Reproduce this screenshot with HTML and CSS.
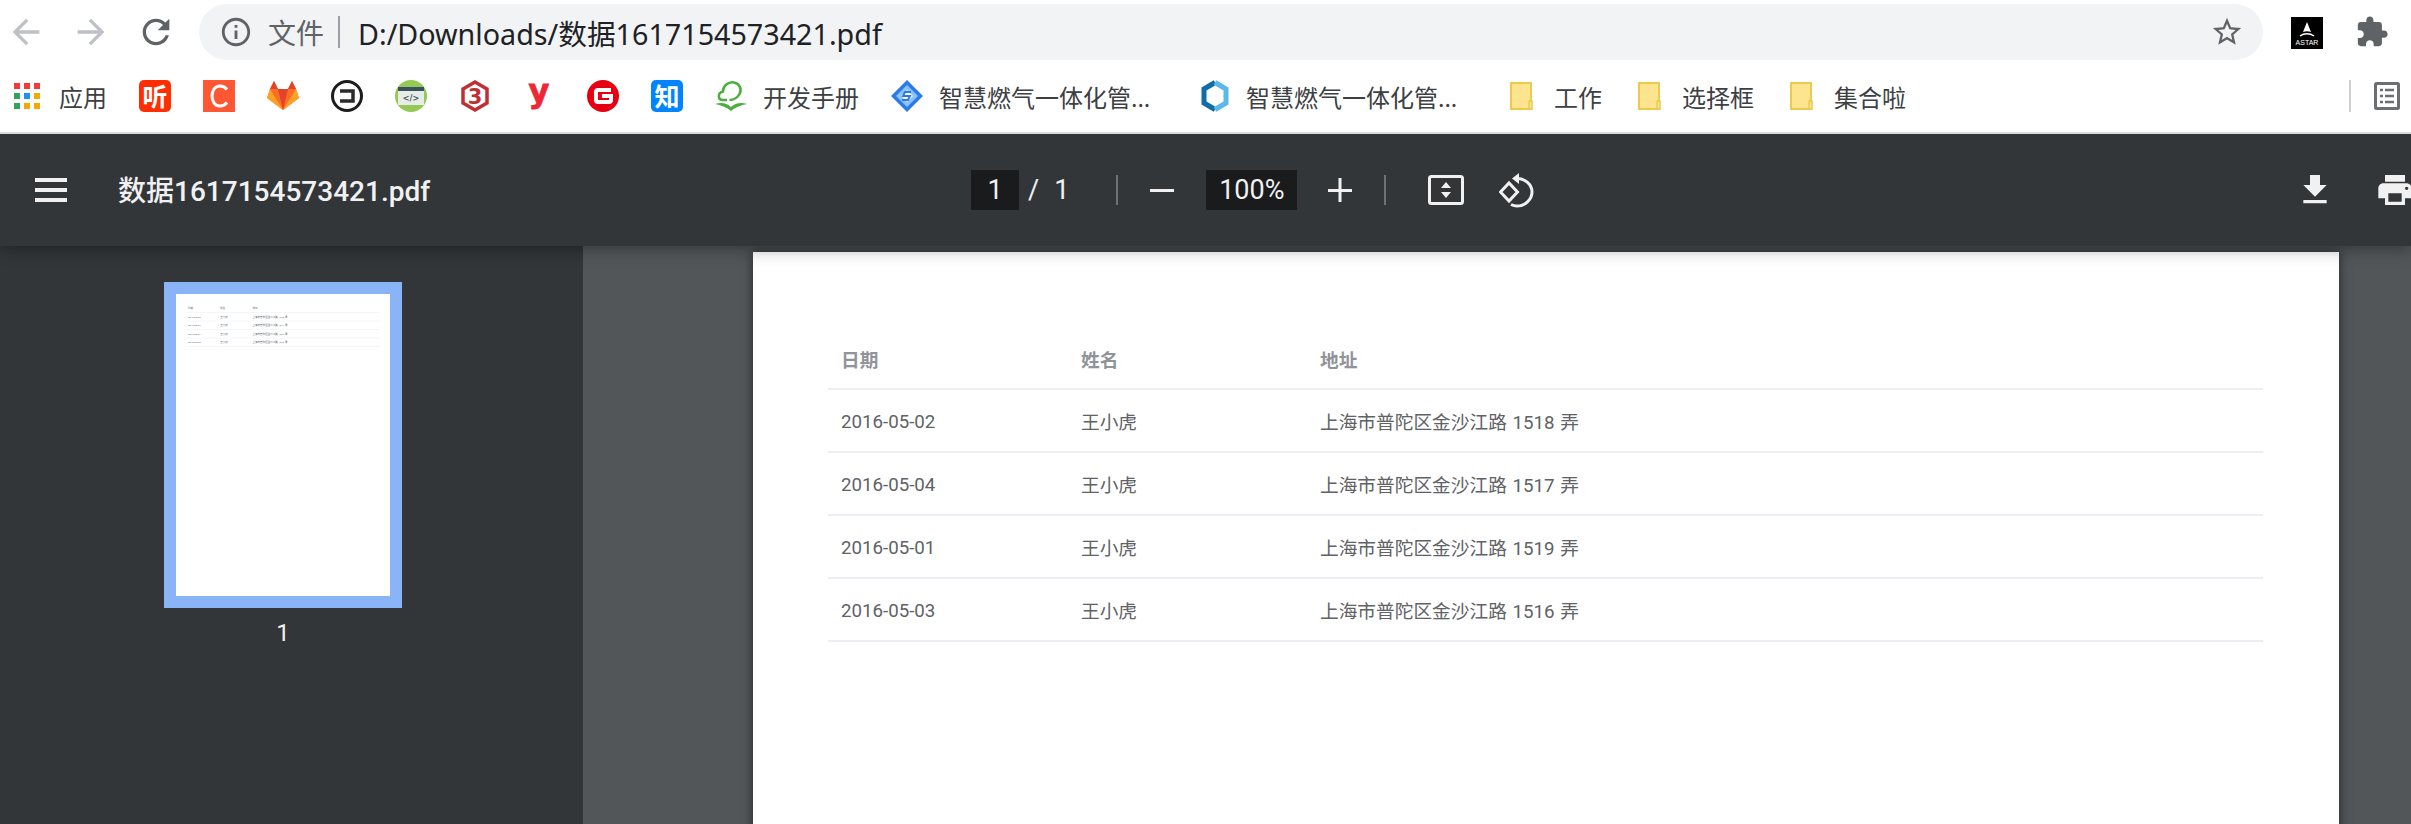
FILE: index.html
```html
<!DOCTYPE html>
<html lang="zh-CN">
<head>
    <meta charset="UTF-8">
    <title>数据1617154573421.pdf</title>
    <link rel="stylesheet" href="styles.css">
</head>
<body>
    <!-- Browser: address row -->
    <div class="address-row">
        <div class="nav">
            <svg class="nav-icon off" viewBox="0 0 24 24"><path d="M20 11H7.830l5.590-5.590L12 4l-8 8 8 8 1.410-1.410L7.830 13H20v-2z"/></svg>
            <svg class="nav-icon off" viewBox="0 0 24 24"><path d="M12 4l-1.410 1.410L16.170 11H4v2h12.170l-5.580 5.590L12 20l8-8z"/></svg>
            <svg class="nav-icon" viewBox="0 0 24 24"><path d="M17.650 6.350C16.200 4.900 14.210 4 12 4c-4.420 0-7.990 3.580-7.990 8s3.570 8 7.990 8c3.730 0 6.840-2.550 7.730-6h-2.080c-.82 2.330-3.040 4-5.650 4-3.310 0-6-2.690-6-6s2.690-6 6-6c1.660 0 3.140.69 4.220 1.780L13 11h7V4l-2.350 2.350z"/></svg>
        </div>
        <div class="omnibox">
            <svg class="info-icon" viewBox="0 0 24 24"><path d="M11 7h2v2h-2zm0 4h2v6h-2zm1-9C6.480 2 2 6.480 2 12s4.480 10 10 10 10-4.480 10-10S17.520 2 12 2zm0 18c-4.410 0-8-3.590-8-8s3.590-8 8-8 8 3.590 8 8-3.590 8-8 8z"/></svg>
            <span class="scheme">文件</span>
            <span class="omni-sep"></span>
            <span class="url">D:/Downloads/数据1617154573421.pdf</span>
            <svg class="star-icon" viewBox="0 0 24 24"><path d="M22 9.240l-7.190-.62L12 2 9.190 8.630 2 9.240l5.460 4.730L5.820 21 12 17.270 18.180 21l-1.630-7.030L22 9.240zM12 15.400l-3.760 2.270 1-4.280-3.320-2.880 4.380-.38L12 6.100l1.710 4.040 4.380.38-3.320 2.880 1 4.280L12 15.400z"/></svg>
        </div>
        <svg class="astar" viewBox="0 0 32 32">
            <rect width="32" height="32" fill="#000"/>
            <path d="M16 5l4 10c-2.500-1-5.500-1-8 0z" fill="#fff"/>
            <path d="M9 19c4-3 10-3 14 0" fill="none" stroke="#fff" stroke-width="1.500"/>
            <text x="16" y="28" class="astar-text">ASTAR</text>
        </svg>
        <svg class="puzzle" viewBox="0 0 24 24"><path d="M20.500 11H19V7c0-1.100-.9-2-2-2h-4V3.500C13 2.120 11.880 1 10.500 1S8 2.120 8 3.500V5H4c-1.100 0-1.990.9-1.990 2v3.800H3.500c1.490 0 2.700 1.210 2.700 2.700s-1.210 2.700-2.700 2.700H2V20c0 1.100.9 2 2 2h3.800v-1.500c0-1.490 1.210-2.700 2.700-2.700 1.490 0 2.700 1.210 2.700 2.700V22H17c1.100 0 2-.9 2-2v-4h1.500c1.380 0 2.500-1.120 2.500-2.500S21.880 11 20.500 11z"/></svg>
    </div>

    <!-- Browser: bookmarks -->
    <div class="bookmarks">
        <div class="bm bm-apps">
            <div class="apps-grid">
                <i class="red"></i><i class="red"></i><i class="red"></i>
                <i class="green"></i><i class="blue"></i><i class="amber"></i>
                <i class="green"></i><i class="amber"></i><i class="amber"></i>
            </div>
            <span>应用</span>
        </div>
        <div class="bm-logos">
            <span class="logo-tile tile-ting">听</span>
            <svg class="logo" viewBox="0 0 32 32"><rect width="32" height="32" fill="#ff5733"/><path d="M24 9.500C22 7 19.500 6 17 6c-5 0-8 4.500-8 10s3 10 8 10c2.500 0 5-1 7-3.500" fill="none" stroke="#fff" stroke-width="3"/></svg>
            <svg class="logo" viewBox="0 0 32 32"><path d="M16 30L0 18l3-9 4-8 4 8h10l4-8 4 8 3 9z" fill="#fc6d26"/><path d="M16 30L0 18l3-9z" fill="#fca326"/><path d="M16 30l16-12-3-9z" fill="#fca326"/><path d="M16 30L11 9h10z" fill="#e24329"/><path d="M3 9l4-8 4 8zM21 9l4-8 4 8z" fill="#e24329"/></svg>
            <svg class="logo" viewBox="0 0 32 32"><circle cx="16" cy="16" r="14.500" fill="#fff" stroke="#1c1c1c" stroke-width="3"/><path d="M9 11h13v10H9" fill="none" stroke="#2a2a2a" stroke-width="3.500"/></svg>
            <svg class="logo" viewBox="0 0 32 32"><circle cx="16" cy="16" r="16" fill="#93c954"/><rect x="3" y="8" width="26" height="17" fill="#e8ece6"/><rect x="3" y="7" width="26" height="4" fill="#37515f"/><text x="16" y="21" class="code-text">&lt;/&gt;</text></svg>
            <svg class="logo" viewBox="0 0 32 32"><path d="M16 2l12 7v14l-12 7-12-7V9z" fill="none" stroke="#bf2f33" stroke-width="3.500"/><text x="16" y="24" class="three-text">3</text></svg>
            <span class="logo-tile tile-y">y</span>
            <svg class="logo" viewBox="0 0 32 32"><circle cx="16" cy="16" r="16" fill="#e60012"/><path d="M24 10H11a2 2 0 0 0-2 2v8a2 2 0 0 0 2 2h11a2 2 0 0 0 2-2v-4h-9" fill="none" stroke="#fff" stroke-width="4"/></svg>
            <span class="logo-tile tile-zhi">知</span>
            <svg class="logo" viewBox="0 0 32 32"><path d="M12 20H8c-5 0-6-7 0-8.500C8 6 13 1.500 19 2.500c6 1 8 7 5.500 11.500-2 3.500-6 6-10 6" fill="none" stroke="#4cae3f" stroke-width="2.500"/><path d="M0 24c6-2 12-1 16 3 4-4 10-5 16-3-6 1-11 3-16 7-5-4-10-6-16-7z" fill="#4cae3f"/></svg>
        </div>
        <div class="bm"><span>开发手册</span></div>
        <div class="bm bm-wide">
            <svg class="logo" viewBox="0 0 32 32"><path d="M16 0l16 16-16 16L0 16z" fill="#2d7bea"/><path d="M16 5l11 11-11 11L5 16z" fill="#8cc3f7"/><path d="M16 10l6 6-6 6-6-6z" fill="#fff"/><path d="M20 12h-6l-2 4h7l-2 4h-6" fill="none" stroke="#2d7bea" stroke-width="2"/></svg>
            <span>智慧燃气一体化管...</span>
        </div>
        <div class="bm bm-wide">
            <svg class="logo logo-hex" viewBox="0 0 30 32"><path d="M15 2.500L4 9v14l11 6.500" fill="none" stroke="#0f6da8" stroke-width="5"/><path d="M15 2.500L26 9v14l-11 6.500" fill="none" stroke="#5cb8e6" stroke-width="5"/></svg>
            <span>智慧燃气一体化管...</span>
        </div>
        <div class="bm bm-folder"><svg class="folder" viewBox="0 0 24 28"><path d="M1 1h20v26H1z" fill="#fde58f" stroke="#ecc94f" stroke-width="2"/><path d="M19 19h3v8h-3z" fill="#fde58f" stroke="#ecc94f" stroke-width="1.500"/></svg><span>工作</span></div>
        <div class="bm bm-folder"><svg class="folder" viewBox="0 0 24 28"><path d="M1 1h20v26H1z" fill="#fde58f" stroke="#ecc94f" stroke-width="2"/><path d="M19 19h3v8h-3z" fill="#fde58f" stroke="#ecc94f" stroke-width="1.500"/></svg><span>选择框</span></div>
        <div class="bm bm-folder"><svg class="folder" viewBox="0 0 24 28"><path d="M1 1h20v26H1z" fill="#fde58f" stroke="#ecc94f" stroke-width="2"/><path d="M19 19h3v8h-3z" fill="#fde58f" stroke="#ecc94f" stroke-width="1.500"/></svg><span>集合啦</span></div>
        <div class="bm-end">
            <span class="bm-sep"></span>
            <svg class="reading" viewBox="0 0 26 28"><rect x="1.500" y="1.500" width="23" height="25" rx="1" fill="none" stroke="#6b6e72" stroke-width="3"/><path d="M6 8h3M6 14h3M6 20h3M11 8h9M11 14h9M11 20h9" stroke="#6b6e72" stroke-width="2.500"/></svg>
        </div>
    </div>

    <!-- PDF viewer toolbar -->
    <div class="pdf-toolbar">
        <div class="tb-left">
            <svg class="menu-icon" viewBox="0 0 32 24"><path d="M0 0h32v4H0zM0 10h32v4H0zM0 20h32v4H0z"/></svg>
            <span class="doc-title">数据1617154573421.pdf</span>
        </div>
        <div class="tb-center">
            <span class="num-box page-box">1</span>
            <span class="page-slash">/</span>
            <span class="page-total">1</span>
            <span class="tb-sep first"></span>
            <svg class="tb-icon" viewBox="0 0 24 24"><path d="M0 11h24v3H0z"/></svg>
            <span class="num-box zoom-box">100%</span>
            <svg class="tb-icon" viewBox="0 0 24 24"><path d="M0 11h24v3H0zM10.500 0h3v24h-3z"/></svg>
            <span class="tb-sep second"></span>
            <svg class="fit-icon" viewBox="0 0 36 30"><rect x="1.500" y="1.500" width="33" height="27" rx="2" fill="none" stroke="#f1f1f1" stroke-width="3"/><path d="M18 7l5 6H13zM18 23l-5-6h10z" fill="#f1f1f1"/></svg>
            <svg class="rotate-icon" viewBox="0 0 36 36"><path d="M1.500 20L10 11l8.500 9-8.500 9z" fill="none" stroke="#f1f1f1" stroke-width="3"/><path d="M18 6.500c8 0 15 6 15 13.500s-7 14-15 14c-2 0-4-.5-6-1.500" fill="none" stroke="#f1f1f1" stroke-width="3"/><path d="M20 1v11l-7-5.500z" fill="#f1f1f1"/></svg>
        </div>
        <div class="tb-right">
            <svg class="action-icon" viewBox="0 0 24 24"><path d="M19 9h-4V3H9v6H5l7 7 7-7zM5 18v2h14v-2H5z"/></svg>
            <svg class="action-icon" viewBox="0 0 24 24"><path d="M19 8H5c-1.660 0-3 1.340-3 3v6h4v4h12v-4h4v-6c0-1.660-1.340-3-3-3zm-3 11H8v-5h8v5zm3-7c-.55 0-1-.45-1-1s.45-1 1-1 1 .45 1 1-.45 1-1 1zm-1-9H6v4h12V3z"/></svg>
        </div>
    </div>

    <div class="viewer">
        <!-- Thumbnails -->
        <div class="sidebar">
            <div class="thumb">
                <div class="thumb-inner">
                    <table class="data-table">
                        <tr><th>日期</th><th>姓名</th><th>地址</th></tr>
                        <tr><td>2016-05-02</td><td>王小虎</td><td>上海市普陀区金沙江路 1518 弄</td></tr>
                        <tr><td>2016-05-04</td><td>王小虎</td><td>上海市普陀区金沙江路 1517 弄</td></tr>
                        <tr><td>2016-05-01</td><td>王小虎</td><td>上海市普陀区金沙江路 1519 弄</td></tr>
                        <tr><td>2016-05-03</td><td>王小虎</td><td>上海市普陀区金沙江路 1516 弄</td></tr>
                    </table>
                </div>
            </div>
            <div class="thumb-num">1</div>
        </div>

        <!-- Page -->
        <div class="main-view">
            <div class="page">
                <table class="data-table">
                    <tr><th>日期</th><th>姓名</th><th>地址</th></tr>
                    <tr><td>2016-05-02</td><td>王小虎</td><td>上海市普陀区金沙江路 1518 弄</td></tr>
                    <tr><td>2016-05-04</td><td>王小虎</td><td>上海市普陀区金沙江路 1517 弄</td></tr>
                    <tr><td>2016-05-01</td><td>王小虎</td><td>上海市普陀区金沙江路 1519 弄</td></tr>
                    <tr><td>2016-05-03</td><td>王小虎</td><td>上海市普陀区金沙江路 1516 弄</td></tr>
                </table>
            </div>
        </div>
    </div>
</body>
</html>
```

FILE: styles.css
```css
html, body {
    margin: 0;
    padding: 0;
    height: 100%;
}
body {
    width: 2411px;
    height: 824px;
    overflow: hidden;
    display: flex;
    flex-direction: column;
    background: #fff;
    font-family: "Noto Sans", "Noto Sans CJK SC", sans-serif;
}
svg {
    display: block;
    flex: none;
}

/* Address row */
.address-row {
    height: 66px;
    box-sizing: border-box;
    padding: 4px 24px 6px 0;
    display: flex;
    align-items: center;
}
.nav {
    display: flex;
    align-items: center;
    gap: 33px;
    padding-left: 10px;
    margin-right: 27px;
}
.nav-icon {
    width: 40px;
    height: 40px;
    margin: 0 -4px;
    fill: #5f6368;
}
.nav-icon.off {
    fill: #bdc1c6;
}
.omnibox {
    flex: 1;
    height: 56px;
    box-sizing: border-box;
    padding: 0 19px 0 20px;
    display: flex;
    align-items: center;
    background: #f1f3f4;
    border-radius: 28px;
}
.info-icon {
    width: 34px;
    height: 34px;
    fill: #5f6368;
}
.scheme {
    margin-left: 15px;
    font-size: 28px;
    color: #5f6368;
}
.omni-sep {
    width: 2px;
    height: 32px;
    margin: 0 18px 0 14px;
    background: #9aa0a6;
}
.url {
    font-size: 28.700px;
    color: #202124;
    flex: 1;
}
.star-icon {
    width: 34px;
    height: 34px;
    fill: #5f6368;
}
.astar {
    width: 32px;
    height: 32px;
    margin-left: 28px;
    margin-top: 2px;
}
.astar-text {
    font-family: "Liberation Sans", sans-serif;
    font-size: 7px;
    fill: #fff;
    text-anchor: middle;
}
.puzzle {
    width: 34px;
    height: 34px;
    margin-left: 32px;
    margin-right: -2px;
    fill: #5f6368;
}

/* Bookmarks */
.bookmarks {
    height: 66px;
    box-sizing: border-box;
    padding: 0 0 6px 14px;
    display: flex;
    align-items: center;
    font-size: 24px;
    color: #3c4043;
}
.bm {
    display: flex;
    align-items: center;
    gap: 16px;
}
.bm-apps {
    gap: 19px;
    margin-right: 32px;
}
.apps-grid {
    display: grid;
    grid-template-columns: repeat(3, 6px);
    grid-auto-rows: 6px;
    gap: 4px;
}
.apps-grid i {
    display: block;
}
.apps-grid .red { background: #f8373a; }
.apps-grid .green { background: #34a35a; }
.apps-grid .blue { background: #1e90ff; }
.apps-grid .amber { background: #f5a800; }
.bm-logos {
    display: flex;
    align-items: center;
    gap: 32px;
    margin-right: 16px;
}
.logo {
    width: 32px;
    height: 32px;
}
.logo-hex { width: 30px; }
.logo-tile {
    width: 32px;
    height: 32px;
    flex: none;
    box-sizing: border-box;
    display: flex;
    align-items: center;
    justify-content: center;
    font-size: 25px;
    font-weight: 700;
    line-height: 1;
    color: #fff;
    border-radius: 5px;
}
.tile-ting { background: #ff2d00; }
.tile-zhi { background: #0084ff; }
.tile-y {
    padding-bottom: 11px;
    font-family: "DejaVu Sans", sans-serif;
    font-size: 32px;
    color: #ee2737;
    -webkit-text-stroke: 0.8px #ee2737;
}
.code-text {
    font-family: "DejaVu Sans", sans-serif;
    font-size: 8px;
    font-weight: 700;
    fill: #47565e;
    text-anchor: middle;
}
.three-text {
    font-family: "DejaVu Sans", sans-serif;
    font-size: 21px;
    font-weight: 700;
    fill: #bf2f33;
    text-anchor: middle;
}
.bm-wide {
    margin-left: 32px;
}
.bm-wide span {
    width: 212px;
    white-space: nowrap;
}
.bm-wide + .bm-wide {
    margin-left: 49px;
}
.bm-folder {
    gap: 20px;
    margin-left: 36px;
}
.bm-wide + .bm-folder {
    margin-left: 52px;
}
.folder {
    width: 24px;
    height: 28px;
}
.bm-end {
    margin-left: auto;
    padding-right: 11px;
    display: flex;
    align-items: center;
    gap: 23px;
}
.bm-sep {
    width: 2px;
    height: 32px;
    background: #d0d0d0;
}
.reading {
    width: 26px;
    height: 28px;
}

/* PDF toolbar */
.pdf-toolbar {
    height: 112px;
    flex: none;
    position: relative;
    z-index: 2;
    display: flex;
    align-items: center;
    background: #323639;
    border-top: 2px solid #dadce0;
    box-shadow: 0 2px 16px rgba(0,0,0,0.4);
    clip-path: inset(0 0 -40px 0);
    color: #f1f1f1;
}
.tb-left {
    width: 971px;
    flex: none;
    display: flex;
    align-items: center;
    padding-left: 35px;
    box-sizing: border-box;
}
.menu-icon {
    width: 32px;
    height: 24px;
    fill: #f1f1f1;
}
.doc-title {
    margin: 0 0 2px 51px;
    font-family: Roboto, "Noto Sans CJK SC", sans-serif;
    font-size: 28px;
    font-weight: 500;
    color: #f1f1f1;
}
.tb-center {
    display: flex;
    align-items: center;
    font-family: Roboto, "Noto Sans CJK SC", sans-serif;
    font-size: 27px;
}
.num-box {
    height: 40px;
    display: flex;
    align-items: center;
    justify-content: center;
    background: #191b1c;
}
.page-box {
    width: 48px;
}
.page-slash {
    margin-left: 9px;
}
.page-total {
    margin-left: 15px;
}
.tb-sep {
    width: 2px;
    height: 30px;
    background: #6f7275;
}
.tb-sep.first {
    margin: 0 32px 0 47px;
}
.tb-sep.second {
    margin: 0 42px 0 32px;
}
.tb-icon {
    width: 24px;
    height: 24px;
    fill: #f1f1f1;
}
.zoom-box {
    width: 91px;
    margin: 0 31px 0 32px;
}
.fit-icon {
    width: 36px;
    height: 30px;
}
.rotate-icon {
    width: 36px;
    height: 36px;
    margin-left: 35px;
}
.tb-right {
    margin-left: auto;
    margin-right: -4px;
    display: flex;
    align-items: center;
    gap: 40px;
}
.action-icon {
    width: 40px;
    height: 40px;
    fill: #f1f1f1;
}

/* Viewer body */
.viewer {
    flex: 1;
    min-height: 0;
    display: flex;
}
.sidebar {
    width: 583px;
    flex: none;
    box-sizing: border-box;
    padding: 36px 0 0 164px;
    background: #323639;
}
.thumb {
    width: 214px;
    height: 302px;
    border: 12px solid #8ab4f8;
    background: #fff;
    overflow: hidden;
}
.thumb-inner {
    width: 1586px;
    box-sizing: border-box;
    padding: 74px 76px 0 75px;
    transform: scale(0.135);
    transform-origin: 0 0;
}
.thumb-inner .data-table th,
.thumb-inner .data-table td {
    border-bottom-width: 4px;
}
.thumb-num {
    width: 238px;
    margin-top: 9px;
    text-align: center;
    font-family: Roboto, sans-serif;
    font-size: 24px;
    line-height: 32px;
    color: #f1f1f1;
}
.main-view {
    flex: 1;
    min-width: 0;
    padding-left: 170px;
    background: #525659;
    overflow: hidden;
}
.page {
    width: 1586px;
    height: 640px;
    box-sizing: border-box;
    margin-top: 6px;
    padding: 74px 76px 0 75px;
    background: #fff;
    box-shadow: 0 0 10px rgba(0,0,0,0.55);
}

/* Table on the page */
.data-table {
    width: 100%;
    border-collapse: collapse;
    table-layout: fixed;
    font-family: Roboto, "Noto Sans CJK SC", sans-serif;
    font-size: 18.700px;
    word-spacing: 1px;
    color: #606266;
}
.data-table th,
.data-table td {
    height: 63px;
    box-sizing: border-box;
    padding: 0 13px;
    text-align: left;
    vertical-align: middle;
    border-bottom: 2px solid #ebeef5;
}
.data-table th {
    padding-top: 2px;
    color: #909399;
    font-weight: 700;
}
.data-table td:first-child {
    padding-top: 2px;
}
.data-table th:nth-child(1) { width: 240px; }
.data-table th:nth-child(2) { width: 239px; }
```
